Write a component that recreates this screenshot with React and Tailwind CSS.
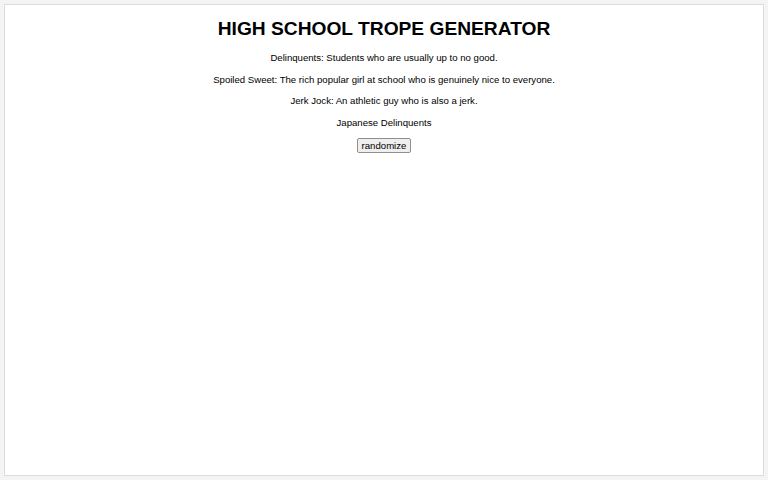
export default function App() {
  return (
    <div
      className="h-[480px] w-[768px] bg-[#f4f4f4] p-1"
      style={{ fontFamily: '"Liberation Sans", Arial, sans-serif' }}
    >
      <div className="flex h-full flex-col items-center border border-[#dcdcdc] bg-white pt-[13px] text-center text-black">
        {/* Heading */}
        <h1 className="text-[19.2px] font-bold leading-[22px]">HIGH SCHOOL TROPE GENERATOR</h1>

        {/* Tropes */}
        <div className="mt-[12px] flex flex-col gap-[10.5px] text-[9.6px] leading-[11px] text-black">
          <p>Delinquents: Students who are usually up to no good.</p>
          <p>Spoiled Sweet: The rich popular girl at school who is genuinely nice to everyone.</p>
          <p>Jerk Jock: An athletic guy who is also a jerk.</p>
          <p>Japanese Delinquents</p>
        </div>

        <button className="mt-[10px] rounded-[2px] border border-[#8f8f8f] bg-[#efefef] px-[4px] py-[1px] text-[9.6px] leading-[11px] text-black">
          randomize
        </button>
      </div>
    </div>
  );
}
